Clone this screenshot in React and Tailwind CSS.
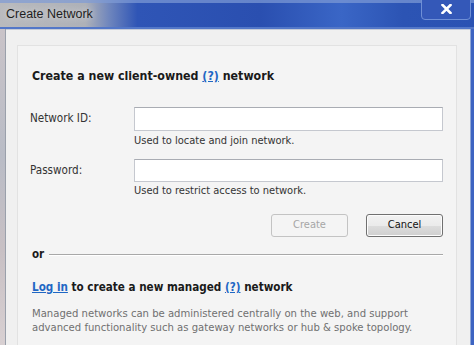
export default function App() {
  return (
    <div className="w-[474px] h-[345px] overflow-hidden flex flex-col bg-[#3d63c0] font-['DejaVu_Sans_Condensed','DejaVu_Sans',sans-serif]">
      {/* Title bar */}
      <div className="relative h-[29px] shrink-0 bg-[linear-gradient(to_right,#b9babd_0%,#aeb1b8_18%,#6f86bd_23%,#2f55b6_29%,#2a4fb0_55%,#3a66c6_72%,#2c54b4_85%,#2a52b3_100%)]">
        <div className="absolute inset-x-0 top-0 h-[3px] bg-[#7f9bd6]/70" />
        <div className="absolute inset-x-0 bottom-0 h-[2px] bg-[#5377c8]" />
        <div className="absolute left-[6px] top-[6px] text-[12.5px] leading-[16px] text-[#1e1e1e] font-['Liberation_Sans',sans-serif] [text-shadow:0_0_6px_#e0e0e0]">
          Create Network
        </div>
        <div className="absolute left-[421px] top-[-2px] w-[50px] h-[22px] rounded-b-[4px] border border-[#6f8fd6] bg-[#3458b8] flex items-center justify-center">
          <svg width="11" height="10" viewBox="0 0 11 10">
            <path d="M1.5 1 L9.5 9 M9.5 1 L1.5 9" stroke="#ffffff" strokeWidth="2.6" strokeLinecap="square" />
          </svg>
        </div>
      </div>
      {/* Body */}
      <div className="flex-1 flex min-h-0">
        <div className="w-[6px] shrink-0 bg-[linear-gradient(to_bottom,#c9c3c8,#b9bcc6_40%,#c8c0c4_70%,#d8d0d2)] border-r border-[#9aa0ab]" />
        <div className="flex-1 bg-[#f0f0f0] border-t border-[#c6ccd8] pt-[15px] pl-[11px] pr-[13px] min-w-0">
          <div className="h-[400px] border-t border-l border-r border-[#e2e2e2] bg-[#f4f4f4] pl-[12px] pr-[13px] pt-[22px] text-[11px] text-[#333]">
            <div className="ml-[2px] h-[16px] leading-[16px] font-bold text-[#1a1a1a] text-[12.3px]">
              Create a new client-owned <span className="text-[#1f67c4] underline">(?)</span> network
            </div>

            <div className="flex items-center mt-[23px]">
              <div className="w-[104px] text-[11.6px] text-[#333]">Network ID:</div>
              <div className="flex-1 h-[24px] bg-white border border-[#c5c8cf] border-t-[#a9acb3]" />
            </div>
            <div className="ml-[104px] mt-[2px] h-[16px] leading-[16px] text-[#333]">Used to locate and join network.</div>

            <div className="flex items-center mt-[10px]">
              <div className="w-[104px] text-[11.6px] text-[#333]">Password:</div>
              <div className="flex-1 h-[23px] bg-white border border-[#c5c8cf] border-t-[#a9acb3]" />
            </div>
            <div className="ml-[104px] mt-[1px] h-[16px] leading-[16px] text-[#333]">Used to restrict access to network.</div>

            <div className="flex justify-end gap-[18px] mt-[15px]">
              <div className="w-[77px] h-[23px] rounded-[3px] border border-[#c3c3c3] bg-[#f4f4f4] flex items-center justify-center text-[#a6a6a6]">
                Create
              </div>
              <div className="w-[77px] h-[23px] rounded-[3px] border border-[#707070] bg-[linear-gradient(to_bottom,#f2f2f2_0%,#ebebeb_50%,#dddddd_51%,#cfcfcf_100%)] shadow-[inset_0_0_0_1px_#fcfcfc] flex items-center justify-center text-[#111]">
                Cancel
              </div>
            </div>

            <div className="flex items-center mt-[10px] h-[16px] ml-[2px]">
              <span className="font-bold text-[#1a1a1a] text-[11.5px]">or</span>
              <div className="flex-1 ml-[5px] h-[2px] border-t border-[#a8a8a8] border-b border-b-white" />
            </div>

            <div className="ml-[2px] mt-[16px] h-[16px] leading-[16px] font-bold text-[#1a1a1a] text-[11.6px]">
              <span className="text-[#1f67c4] underline">Log in</span> to create a new managed <span className="text-[#1f67c4] underline">(?)</span> network
            </div>

            <div className="ml-[2px] mt-[12px] leading-[14px] text-[11.2px] text-[#707070]">
              Managed networks can be administered centrally on the web, and support
              <br />
              advanced functionality such as gateway networks or hub &amp; spoke topology.
            </div>
          </div>
        </div>
        <div className="w-[4px] shrink-0 bg-[#3d64c2] border-l border-[#8fa6d6]" />
      </div>
    </div>
  );
}
